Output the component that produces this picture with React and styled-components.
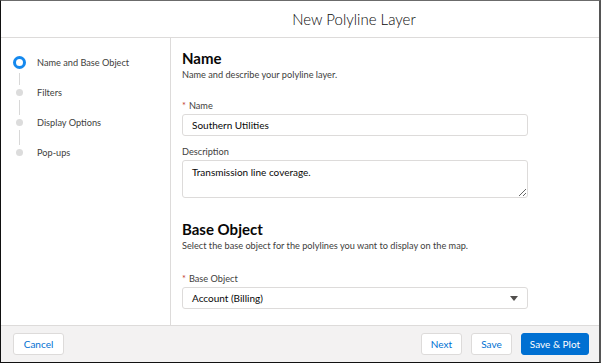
import React from "react";
import styled, { createGlobalStyle } from "styled-components";

const GlobalStyle = createGlobalStyle`
  html, body {
    margin: 0;
    padding: 0;
    background: #ffffff;
  }
  * {
    box-sizing: border-box;
  }
  body {
    font-family: "Lato", "Open Sans", sans-serif;
    color: #080707;
  }
`;

// Frame and regions
const Frame = styled.div`
  width: 601px;
  height: 363px;
  display: flex;
  flex-direction: column;
  border-left: 1px solid #111;
  border-top: 1px solid #6b6b6b;
  border-right: 2px solid #555;
  border-bottom: 1px solid #111;
  overflow: hidden;
  background: #fff;
`;

const Header = styled.header`
  height: 37px;
  flex-shrink: 0;
  display: flex;
  align-items: center;
  justify-content: center;
  padding-left: 108px;
  border-bottom: 1px solid #dddbda;
`;

const Title = styled.h1`
  margin: 0;
  font-size: 15px;
  font-weight: 300;
  color: #080707;
`;

const Body = styled.div`
  flex: 1;
  display: flex;
  min-height: 0;
`;

const Sidebar = styled.nav`
  width: 170px;
  flex-shrink: 0;
  border-right: 1px solid #dddbda;
  padding-top: 9px;
`;

const Step = styled.div`
  height: 30px;
  display: flex;
  align-items: stretch;
`;

const Marker = styled.div`
  width: 36px;
  display: flex;
  flex-direction: column;
  align-items: center;
`;

const Rail = styled.span`
  flex: 1;
  width: 1px;
  margin: ${(p) => (p.$top ? "0 0 4px" : "4px 0 0")};
  background: ${(p) => (p.$hidden ? "transparent" : "#d8d8d8")};
`;

const Dot = styled.span`
  width: ${(p) => (p.$active ? "13px" : "7px")};
  height: ${(p) => (p.$active ? "13px" : "7px")};
  border-radius: 50%;
  flex-shrink: 0;
  background: ${(p) => (p.$active ? "#fff" : "#dcdcdc")};
  border: ${(p) => (p.$active ? "3px solid #1589ee" : "none")};
`;

const StepLabel = styled.span`
  display: flex;
  align-items: center;
  font-size: 9.2px;
  color: #3e3e3c;
`;

const Content = styled.main`
  flex: 1;
  padding: 10px 11px 0 11px;
  overflow: hidden;
`;

const SectionTitle = styled.h2`
  margin: ${(p) => p.$top || 0}px 0 0;
  font-size: 15px;
  font-weight: 700;
  color: #080707;
  line-height: 20px;
`;

const SectionText = styled.p`
  margin: 0 0 ${(p) => p.$gap || 0}px;
  font-size: 9.2px;
  color: #3e3e3c;
  line-height: 13px;
`;

const Field = styled.div`
  width: 346px;
  margin-bottom: 10px;
`;

const Label = styled.label`
  display: block;
  font-size: 9.2px;
  color: #3e3e3c;
  line-height: 12px;
  margin-bottom: 2px;
`;

const Required = styled.abbr`
  color: #c23934;
  text-decoration: none;
  margin-right: 3px;
`;

const TextInput = styled.input`
  display: block;
  width: 100%;
  height: 22px;
  padding: 0 9px;
  border: 1px solid #dddbda;
  border-radius: 3px;
  font-family: inherit;
  font-size: 10px;
  color: #080707;
  outline: none;
`;

const TextArea = styled.textarea`
  display: block;
  width: 100%;
  height: 38px;
  padding: 5px 9px;
  border: 1px solid #dddbda;
  border-radius: 3px;
  font-family: inherit;
  font-size: 10px;
  color: #080707;
  outline: none;
  resize: vertical;
`;

const Select = styled.div`
  height: 22px;
  display: flex;
  align-items: center;
  justify-content: space-between;
  padding: 0 9px;
  border: 1px solid #dddbda;
  border-radius: 3px;
  font-size: 10px;
  color: #080707;
`;

const Caret = styled.span`
  width: 0;
  height: 0;
  border-left: 4px solid transparent;
  border-right: 4px solid transparent;
  border-top: 5px solid #514f4d;
`;

const Footer = styled.footer`
  height: 37px;
  flex-shrink: 0;
  display: flex;
  align-items: center;
  gap: 9px;
  padding: 0 10px 0 12px;
  background: #f3f2f2;
  border-top: 1px solid #dddbda;
`;

const Spacer = styled.div`
  flex: 1;
`;

const Button = styled.button`
  height: 22px;
  width: ${(p) => p.$width}px;
  padding: 0;
  border-radius: 3px;
  border: 1px solid ${(p) => (p.$brand ? "#0070d2" : "#dddbda")};
  background: ${(p) => (p.$brand ? "#0070d2" : "#fff")};
  color: ${(p) => (p.$brand ? "#fff" : "#0070d2")};
  font-family: inherit;
  font-size: 10px;
  cursor: pointer;
`;

const steps = ["Name and Base Object", "Filters", "Display Options", "Pop-ups"];

export default function App() {
  return (
    <>
      <GlobalStyle />
      <Frame>
        <Header>
          <Title>New Polyline Layer</Title>
        </Header>
        <Body>
          <Sidebar>
            {steps.map((s, i) => (
              <Step key={s}>
                <Marker>
                  <Rail $top $hidden={i === 0} />
                  <Dot $active={i === 0} />
                  <Rail $hidden={i === steps.length - 1} />
                </Marker>
                <StepLabel>{s}</StepLabel>
              </Step>
            ))}
          </Sidebar>
          <Content>
            <SectionTitle>Name</SectionTitle>
            <SectionText $gap={19}>Name and describe your polyline layer.</SectionText>
            <Field>
              <Label>
                <Required title="required">*</Required>Name
              </Label>
              <TextInput defaultValue="Southern Utilities" />
            </Field>
            <Field>
              <Label>Description</Label>
              <TextArea defaultValue="Transmission line coverage." />
            </Field>
            <SectionTitle $top={21}>Base Object</SectionTitle>
            <SectionText $gap={21}>
              Select the base object for the polylines you want to display on the map.
            </SectionText>
            <Field>
              <Label>
                <Required title="required">*</Required>Base Object
              </Label>
              <Select>
                Account (Billing)
                <Caret />
              </Select>
            </Field>
          </Content>
        </Body>
        <Footer>
          <Button $width={51}>Cancel</Button>
          <Spacer />
          <Button $width={41}>Next</Button>
          <Button $width={41}>Save</Button>
          <Button $width={68} $brand>
            Save &amp; Plot
          </Button>
        </Footer>
      </Frame>
    </>
  );
}
